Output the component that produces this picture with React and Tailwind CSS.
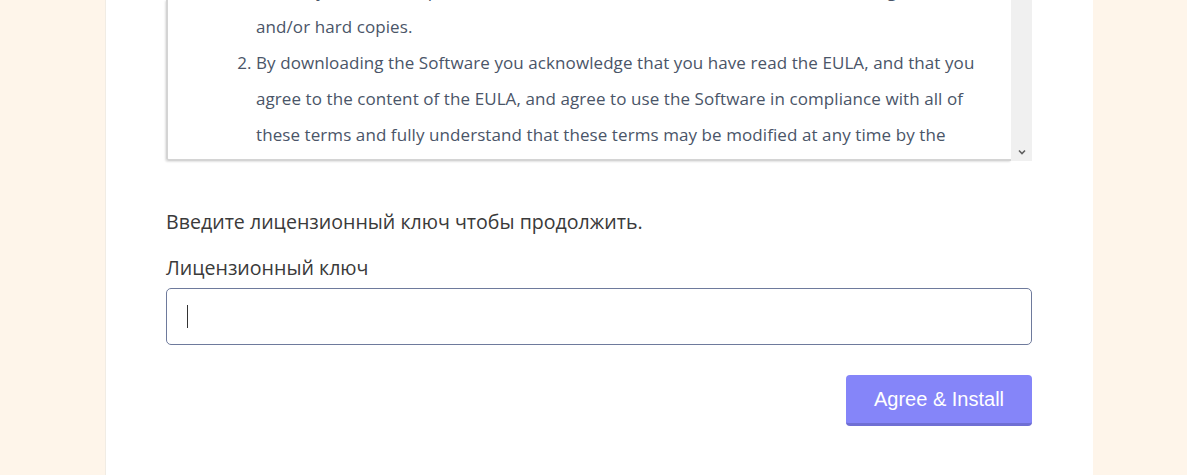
export default function App() {
  return (
    <div className="min-h-screen bg-[#fef5ea] flex justify-center pl-[11px]">
      <div className="w-[988px] min-h-screen bg-white border-l border-[#f1ece4] pl-[60px] pr-[61px]">
        {/* EULA box, scrolled near the bottom */}
        <div className="flex h-[161px]">
          <div className="flex-1 flex flex-col justify-end overflow-hidden rounded-bl-[3px] border-l-2 border-b-2 border-[#d4d4d4] shadow-[-1px_1px_2px_rgba(0,0,0,0.12)] font-['Open_Sans',sans-serif] text-[17px] leading-[36px] text-[#4a5568]">
            <ol className="list-decimal pl-[88px] pr-[18px] -mb-[30px] shrink-0 tracking-[0.08px]">
              <li>
                You may not make copies of the Software, the EULA or the documentation in digital
                <br />
                and/or hard copies.
              </li>
              <li>
                By downloading the Software you acknowledge that you have read the EULA, and that you agree to the content of the EULA, and agree to use the Software in compliance with all of these terms and fully understand that these terms may be modified at any time by the company.
              </li>
            </ol>
          </div>
          <div className="w-[21px] bg-[#f0f0f0] flex flex-col justify-end items-center pb-[6px]">
            <svg width="8" height="6" viewBox="0 0 8 6" className="text-[#606060]">
              <path d="M1 1.5 L4 4.5 L7 1.5" stroke="currentColor" strokeWidth="1.6" fill="none" />
            </svg>
          </div>
        </div>

        <div className="font-['Open_Sans',sans-serif] text-[#3a3a3a]">
          <p className="mt-[47px] text-[19.6px] leading-[28px]">Введите лицензионный ключ чтобы продолжить.</p>
          <label className="block mt-[18px] text-[19.6px] leading-[28px]">Лицензионный ключ</label>
          <div className="mt-[6px] h-[57px] rounded-[5px] border border-[#6e7a9c] flex items-center px-[20px]">
            <div className="w-px h-[23px] bg-[#333]" />
          </div>
        </div>

        <div className="flex justify-end mt-[30px]">
          <button className="w-[186px] h-[51px] rounded-[4px] bg-[#8585f9] border-b-[3px] border-[#6f6fd4] text-white font-['Liberation_Sans',Arial,sans-serif] text-[20px]">
            Agree &amp; Install
          </button>
        </div>
      </div>
    </div>
  )
}
